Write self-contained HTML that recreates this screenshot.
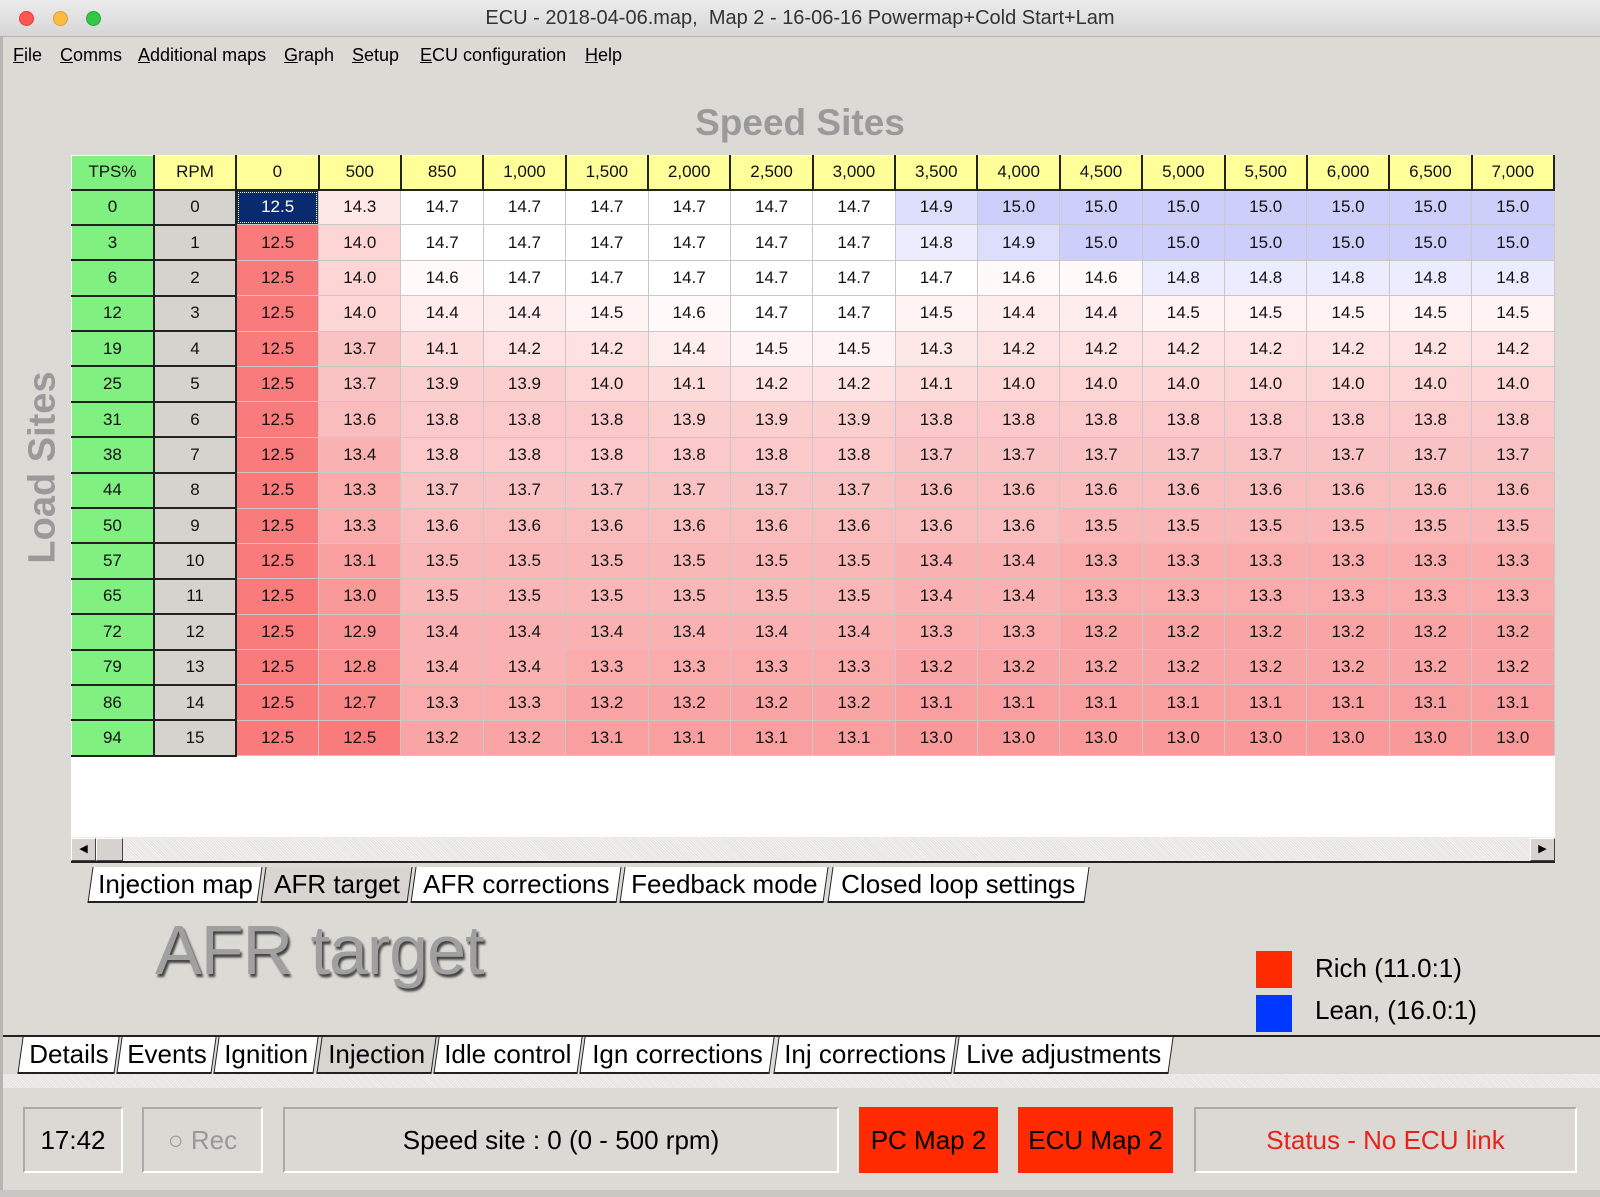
<!DOCTYPE html>
<html><head><meta charset="utf-8"><style>
*{box-sizing:border-box;margin:0;padding:0}
body{width:1600px;height:1197px;background:#dcdad5;font-family:"Liberation Sans",Arial,sans-serif;position:relative;overflow:hidden}
.abs{position:absolute}
#title{left:0;top:0;width:1600px;height:37px;background:linear-gradient(#ececec,#d6d6d6);border-bottom:1px solid #b5b5b5;text-align:center;font-size:20px;line-height:37px;color:#333}
.dot{position:absolute;top:11px;width:15px;height:15px;border-radius:50%}
#menu span{position:absolute;top:45px;font-size:18px;color:#000}
#menu u{text-decoration:underline}
table{position:absolute;left:71px;top:155px;width:1484px;border-collapse:collapse;table-layout:fixed}
td{height:35.4px;text-align:center;font-size:17px;color:#111;border:1px solid #c8c8c8;padding:0}
tr.h td{height:34px;background:#ffff99;border:1px solid #fff;border-right:2px solid #222;border-bottom:2px solid #222}
td.g{background:#80f080;border:1px solid #fff;border-right:2px solid #222;border-bottom:2px solid #222}
td.r{background:#d6d3ce;border:1px solid #fff;border-right:2px solid #222;border-bottom:2px solid #222}
tr.h td.g{background:#80f080}
.a125{background:rgb(250,123,123)}.a127{background:rgb(250,135,135)}.a128{background:rgb(250,141,141)}.a129{background:rgb(250,147,147)}
.a130{background:rgb(250,153,153)}.a131{background:rgb(250,159,159)}.a132{background:rgb(250,165,165)}.a133{background:rgb(250,171,171)}
.a134{background:rgb(250,177,177)}.a135{background:rgb(250,183,183)}.a136{background:rgb(250,189,189)}.a137{background:rgb(250,195,195)}
.a138{background:rgb(251,201,201)}.a139{background:rgb(252,207,207)}.a140{background:rgb(253,213,213)}.a141{background:rgb(253,219,219)}
.a142{background:rgb(254,225,225)}.a143{background:rgb(254,231,231)}.a144{background:rgb(255,237,237)}.a145{background:rgb(255,243,243)}
.a146{background:rgb(255,249,249)}.a147{background:#fff}.a148{background:rgb(236,236,255)}.a149{background:rgb(221,221,252)}.a150{background:rgb(206,206,250)}
td.sel{background:#0a2a6e;color:#fff;outline:1px dotted #fff;outline-offset:-3px}
.tab{position:absolute;background:#fff;border:1px solid #222;border-bottom:2px solid #222;border-top:none;color:#000;text-align:center;white-space:nowrap;transform:skewX(-8deg)}
.tab span{display:inline-block;transform:skewX(8deg)}
.tab.on{background:#d8d5d0}
.pan{position:absolute;top:1107px;height:66px;border:2px solid;border-color:#aaa #fff #fff #aaa;background:#dcd9d4;font-size:26px;line-height:62px;text-align:center}
</style></head><body>
<div id="title" class="abs">ECU - 2018-04-06.map,&nbsp; Map 2 - 16-06-16 Powermap+Cold Start+Lam
<div class="dot" style="left:19px;background:#fc5753;border:1px solid #df3d3a"></div>
<div class="dot" style="left:53px;background:#fdbc40;border:1px solid #de9f34"></div>
<div class="dot" style="left:86px;background:#33c748;border:1px solid #27aa35"></div>
</div>
<div id="menu">
<span style="left:13px"><u>F</u>ile</span><span style="left:60px"><u>C</u>omms</span><span style="left:138px"><u>A</u>dditional maps</span><span style="left:284px"><u>G</u>raph</span><span style="left:352px"><u>S</u>etup</span><span style="left:420px"><u>E</u>CU configuration</span><span style="left:585px"><u>H</u>elp</span>
</div>
<div class="abs" style="left:600px;width:400px;top:102px;text-align:center;font-size:37px;font-weight:bold;color:#9a9a9a">Speed Sites</div>
<div class="abs" style="left:-57px;top:446px;width:200px;text-align:center;font-size:38px;font-weight:bold;color:#9a9a9a;transform:rotate(-90deg)">Load Sites</div>
<div class="abs" style="left:71px;top:755px;width:1484px;height:82px;background:#fff"></div>
<table>
<tr class="h"><td class="g">TPS%</td><td>RPM</td><td>0</td><td>500</td><td>850</td><td>1,000</td><td>1,500</td><td>2,000</td><td>2,500</td><td>3,000</td><td>3,500</td><td>4,000</td><td>4,500</td><td>5,000</td><td>5,500</td><td>6,000</td><td>6,500</td><td>7,000</td></tr>
<tr><td class="g">0</td><td class="r">0</td><td class="sel">12.5</td><td class="a143">14.3</td><td class="a147">14.7</td><td class="a147">14.7</td><td class="a147">14.7</td><td class="a147">14.7</td><td class="a147">14.7</td><td class="a147">14.7</td><td class="a149">14.9</td><td class="a150">15.0</td><td class="a150">15.0</td><td class="a150">15.0</td><td class="a150">15.0</td><td class="a150">15.0</td><td class="a150">15.0</td><td class="a150">15.0</td></tr>
<tr><td class="g">3</td><td class="r">1</td><td class="a125">12.5</td><td class="a140">14.0</td><td class="a147">14.7</td><td class="a147">14.7</td><td class="a147">14.7</td><td class="a147">14.7</td><td class="a147">14.7</td><td class="a147">14.7</td><td class="a148">14.8</td><td class="a149">14.9</td><td class="a150">15.0</td><td class="a150">15.0</td><td class="a150">15.0</td><td class="a150">15.0</td><td class="a150">15.0</td><td class="a150">15.0</td></tr>
<tr><td class="g">6</td><td class="r">2</td><td class="a125">12.5</td><td class="a140">14.0</td><td class="a146">14.6</td><td class="a147">14.7</td><td class="a147">14.7</td><td class="a147">14.7</td><td class="a147">14.7</td><td class="a147">14.7</td><td class="a147">14.7</td><td class="a146">14.6</td><td class="a146">14.6</td><td class="a148">14.8</td><td class="a148">14.8</td><td class="a148">14.8</td><td class="a148">14.8</td><td class="a148">14.8</td></tr>
<tr><td class="g">12</td><td class="r">3</td><td class="a125">12.5</td><td class="a140">14.0</td><td class="a144">14.4</td><td class="a144">14.4</td><td class="a145">14.5</td><td class="a146">14.6</td><td class="a147">14.7</td><td class="a147">14.7</td><td class="a145">14.5</td><td class="a144">14.4</td><td class="a144">14.4</td><td class="a145">14.5</td><td class="a145">14.5</td><td class="a145">14.5</td><td class="a145">14.5</td><td class="a145">14.5</td></tr>
<tr><td class="g">19</td><td class="r">4</td><td class="a125">12.5</td><td class="a137">13.7</td><td class="a141">14.1</td><td class="a142">14.2</td><td class="a142">14.2</td><td class="a144">14.4</td><td class="a145">14.5</td><td class="a145">14.5</td><td class="a143">14.3</td><td class="a142">14.2</td><td class="a142">14.2</td><td class="a142">14.2</td><td class="a142">14.2</td><td class="a142">14.2</td><td class="a142">14.2</td><td class="a142">14.2</td></tr>
<tr><td class="g">25</td><td class="r">5</td><td class="a125">12.5</td><td class="a137">13.7</td><td class="a139">13.9</td><td class="a139">13.9</td><td class="a140">14.0</td><td class="a141">14.1</td><td class="a142">14.2</td><td class="a142">14.2</td><td class="a141">14.1</td><td class="a140">14.0</td><td class="a140">14.0</td><td class="a140">14.0</td><td class="a140">14.0</td><td class="a140">14.0</td><td class="a140">14.0</td><td class="a140">14.0</td></tr>
<tr><td class="g">31</td><td class="r">6</td><td class="a125">12.5</td><td class="a136">13.6</td><td class="a138">13.8</td><td class="a138">13.8</td><td class="a138">13.8</td><td class="a139">13.9</td><td class="a139">13.9</td><td class="a139">13.9</td><td class="a138">13.8</td><td class="a138">13.8</td><td class="a138">13.8</td><td class="a138">13.8</td><td class="a138">13.8</td><td class="a138">13.8</td><td class="a138">13.8</td><td class="a138">13.8</td></tr>
<tr><td class="g">38</td><td class="r">7</td><td class="a125">12.5</td><td class="a134">13.4</td><td class="a138">13.8</td><td class="a138">13.8</td><td class="a138">13.8</td><td class="a138">13.8</td><td class="a138">13.8</td><td class="a138">13.8</td><td class="a137">13.7</td><td class="a137">13.7</td><td class="a137">13.7</td><td class="a137">13.7</td><td class="a137">13.7</td><td class="a137">13.7</td><td class="a137">13.7</td><td class="a137">13.7</td></tr>
<tr><td class="g">44</td><td class="r">8</td><td class="a125">12.5</td><td class="a133">13.3</td><td class="a137">13.7</td><td class="a137">13.7</td><td class="a137">13.7</td><td class="a137">13.7</td><td class="a137">13.7</td><td class="a137">13.7</td><td class="a136">13.6</td><td class="a136">13.6</td><td class="a136">13.6</td><td class="a136">13.6</td><td class="a136">13.6</td><td class="a136">13.6</td><td class="a136">13.6</td><td class="a136">13.6</td></tr>
<tr><td class="g">50</td><td class="r">9</td><td class="a125">12.5</td><td class="a133">13.3</td><td class="a136">13.6</td><td class="a136">13.6</td><td class="a136">13.6</td><td class="a136">13.6</td><td class="a136">13.6</td><td class="a136">13.6</td><td class="a136">13.6</td><td class="a136">13.6</td><td class="a135">13.5</td><td class="a135">13.5</td><td class="a135">13.5</td><td class="a135">13.5</td><td class="a135">13.5</td><td class="a135">13.5</td></tr>
<tr><td class="g">57</td><td class="r">10</td><td class="a125">12.5</td><td class="a131">13.1</td><td class="a135">13.5</td><td class="a135">13.5</td><td class="a135">13.5</td><td class="a135">13.5</td><td class="a135">13.5</td><td class="a135">13.5</td><td class="a134">13.4</td><td class="a134">13.4</td><td class="a133">13.3</td><td class="a133">13.3</td><td class="a133">13.3</td><td class="a133">13.3</td><td class="a133">13.3</td><td class="a133">13.3</td></tr>
<tr><td class="g">65</td><td class="r">11</td><td class="a125">12.5</td><td class="a130">13.0</td><td class="a135">13.5</td><td class="a135">13.5</td><td class="a135">13.5</td><td class="a135">13.5</td><td class="a135">13.5</td><td class="a135">13.5</td><td class="a134">13.4</td><td class="a134">13.4</td><td class="a133">13.3</td><td class="a133">13.3</td><td class="a133">13.3</td><td class="a133">13.3</td><td class="a133">13.3</td><td class="a133">13.3</td></tr>
<tr><td class="g">72</td><td class="r">12</td><td class="a125">12.5</td><td class="a129">12.9</td><td class="a134">13.4</td><td class="a134">13.4</td><td class="a134">13.4</td><td class="a134">13.4</td><td class="a134">13.4</td><td class="a134">13.4</td><td class="a133">13.3</td><td class="a133">13.3</td><td class="a132">13.2</td><td class="a132">13.2</td><td class="a132">13.2</td><td class="a132">13.2</td><td class="a132">13.2</td><td class="a132">13.2</td></tr>
<tr><td class="g">79</td><td class="r">13</td><td class="a125">12.5</td><td class="a128">12.8</td><td class="a134">13.4</td><td class="a134">13.4</td><td class="a133">13.3</td><td class="a133">13.3</td><td class="a133">13.3</td><td class="a133">13.3</td><td class="a132">13.2</td><td class="a132">13.2</td><td class="a132">13.2</td><td class="a132">13.2</td><td class="a132">13.2</td><td class="a132">13.2</td><td class="a132">13.2</td><td class="a132">13.2</td></tr>
<tr><td class="g">86</td><td class="r">14</td><td class="a125">12.5</td><td class="a127">12.7</td><td class="a133">13.3</td><td class="a133">13.3</td><td class="a132">13.2</td><td class="a132">13.2</td><td class="a132">13.2</td><td class="a132">13.2</td><td class="a131">13.1</td><td class="a131">13.1</td><td class="a131">13.1</td><td class="a131">13.1</td><td class="a131">13.1</td><td class="a131">13.1</td><td class="a131">13.1</td><td class="a131">13.1</td></tr>
<tr><td class="g">94</td><td class="r">15</td><td class="a125">12.5</td><td class="a125">12.5</td><td class="a132">13.2</td><td class="a132">13.2</td><td class="a131">13.1</td><td class="a131">13.1</td><td class="a131">13.1</td><td class="a131">13.1</td><td class="a130">13.0</td><td class="a130">13.0</td><td class="a130">13.0</td><td class="a130">13.0</td><td class="a130">13.0</td><td class="a130">13.0</td><td class="a130">13.0</td><td class="a130">13.0</td></tr>
</table>
<!-- scrollbar -->
<div class="abs" style="left:71px;top:837px;width:1484px;height:26px;background:repeating-linear-gradient(45deg,#e4e2de 0 1px,#f4f3f1 1px 2px);border-bottom:2px solid #222"></div>
<div class="abs" style="left:71px;top:838px;width:25px;height:23px;background:#d6d3ce;border:1px solid;border-color:#fff #444 #444 #fff;font-size:11px;line-height:21px;text-align:center">&#9664;</div>
<div class="abs" style="left:96px;top:838px;width:27px;height:23px;background:#d6d3ce;border:1px solid;border-color:#fff #444 #444 #fff"></div>
<div class="abs" style="left:1530px;top:838px;width:25px;height:23px;background:#d6d3ce;border:1px solid;border-color:#fff #444 #444 #fff;font-size:11px;line-height:21px;text-align:center">&#9654;</div>
<!-- upper tabs -->
<div style="font-size:26px;line-height:34px">
<div class="tab" style="left:90px;top:867px;width:170px;height:36px"><span>Injection map</span></div>
<div class="tab on" style="left:263px;top:867px;width:147px;height:36px"><span>AFR target</span></div>
<div class="tab" style="left:413px;top:867px;width:206px;height:36px"><span>AFR corrections</span></div>
<div class="tab" style="left:622px;top:867px;width:204px;height:36px"><span>Feedback mode</span></div>
<div class="tab" style="left:830px;top:867px;width:257px;height:36px"><span>Closed loop settings</span></div>
</div>
<div class="abs" style="left:155px;top:910px;font-size:70px;color:#a0a0a0;text-shadow:2px 3px 2px #444;letter-spacing:-1px">AFR target</div>
<div class="abs" style="left:1256px;top:951px;width:36px;height:37px;background:#ff2a00"></div>
<div class="abs" style="left:1256px;top:995px;width:36px;height:37px;background:#0038ff"></div>
<div class="abs" style="left:1315px;top:953px;font-size:26px">Rich (11.0:1)</div>
<div class="abs" style="left:1315px;top:995px;font-size:26px">Lean, (16.0:1)</div>
<div class="abs" style="left:0;top:1035px;width:1600px;height:2px;background:#222"></div>
<div class="abs" style="left:0;top:1074px;width:1600px;height:14px;background:repeating-linear-gradient(45deg,#e4e2de 0 1px,#f2f1ef 1px 2px)"></div>
<div style="font-size:26px;line-height:34px">
<div class="tab" style="left:20px;top:1037px;width:97px;height:37px"><span>Details</span></div>
<div class="tab" style="left:119px;top:1037px;width:95px;height:37px"><span>Events</span></div>
<div class="tab" style="left:216px;top:1037px;width:100px;height:37px"><span>Ignition</span></div>
<div class="tab on" style="left:319px;top:1037px;width:115px;height:37px"><span>Injection</span></div>
<div class="tab" style="left:436px;top:1037px;width:144px;height:37px"><span>Idle control</span></div>
<div class="tab" style="left:582px;top:1037px;width:190px;height:37px"><span>Ign corrections</span></div>
<div class="tab" style="left:776px;top:1037px;width:178px;height:37px"><span>Inj corrections</span></div>
<div class="tab" style="left:956px;top:1037px;width:215px;height:37px"><span>Live adjustments</span></div>
</div>
<div class="pan" style="left:23px;width:100px">17:42</div>
<div class="pan" style="left:142px;width:121px;color:#999">&#9675; Rec</div>
<div class="pan" style="left:283px;width:556px">Speed site : 0 (0 - 500 rpm)</div>
<div class="pan" style="left:859px;width:139px;background:#ff2a00;border-color:#ff2a00">PC Map 2</div>
<div class="pan" style="left:1018px;width:155px;background:#ff2a00;border-color:#ff2a00">ECU Map 2</div>
<div class="pan" style="left:1194px;width:383px;color:#e8221a">Status - No ECU link</div>
<div class="abs" style="left:0;top:37px;width:3px;height:1160px;background:#b8b6b2"></div>
<div class="abs" style="left:0;top:1190px;width:1600px;height:7px;background:#c8c6c2"></div>
</body></html>
